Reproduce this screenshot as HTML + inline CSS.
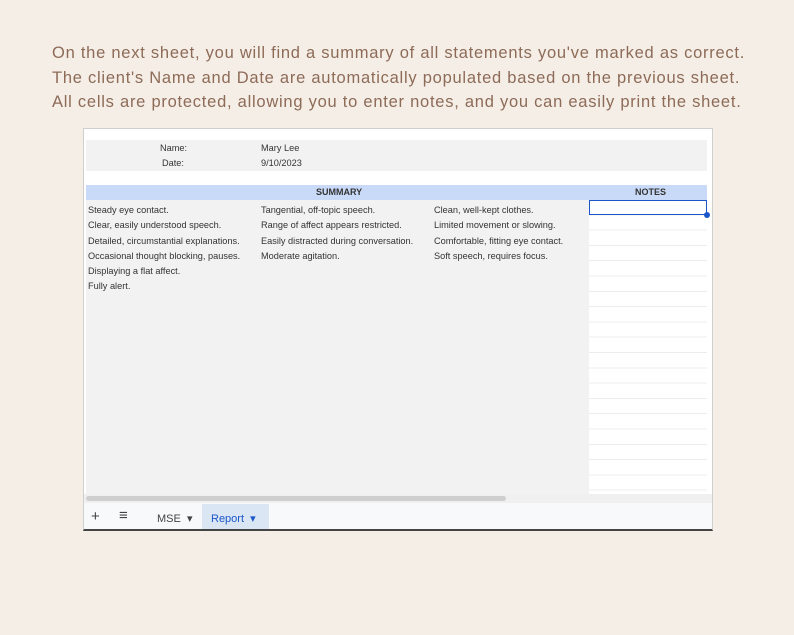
<!DOCTYPE html>
<html><head><style>
body{margin:0;width:794px;height:635px;background:#f5eee7;position:relative;overflow:hidden;font-family:"Liberation Sans",sans-serif}
.intro{position:absolute;left:52px;top:41px;color:#8d6b57;font-size:16.5px;line-height:24.5px;letter-spacing:0.75px;white-space:nowrap}
.sheet{position:absolute;left:83px;top:128px;width:628px;height:400px;background:#fff;border:1px solid #cfcfcf;border-bottom:2px solid #444}
.a{position:absolute;font-size:9.2px;color:#333;white-space:nowrap}
</style></head><body>
<div class="intro">On the next sheet, you will find a summary of all statements you've marked as correct.<br>The client's Name and Date are automatically populated based on the previous sheet.<br>All cells are protected, allowing you to enter notes, and you can easily print the sheet.</div>
<div class="sheet">
<div style="position:absolute;left:2px;top:11px;width:621px;height:31px;background:#f2f2f2"></div>
<div class="a" style="left:76px;top:14px">Name:</div>
<div class="a" style="left:78px;top:29px">Date:</div>
<div class="a" style="left:177px;top:14px">Mary Lee</div>
<div class="a" style="left:177px;top:29px">9/10/2023</div>
<div style="position:absolute;left:2px;top:56px;width:621px;height:15px;background:#c9daf8"></div>
<div class="a" style="left:232px;top:58px;font-weight:bold;font-size:9px">SUMMARY</div>
<div class="a" style="left:551px;top:58px;font-weight:bold;font-size:9px">NOTES</div>
<div style="position:absolute;left:2px;top:71px;width:503px;height:294px;background:#f2f2f2"></div>
<div style="position:absolute;left:505px;top:71px;width:118px;height:294px;background:repeating-linear-gradient(#fff 0 14.3px,#ececec 14.3px 15.3px)"></div>
<div style="position:absolute;left:505px;top:71px;width:116px;height:13px;border:1.5px solid #1a56c8"></div>
<div style="position:absolute;left:620px;top:83px;width:6px;height:6px;border-radius:50%;background:#1a56c8"></div>
<div class="a" style="left:4px;top:74px;line-height:15.3px">Steady eye contact.<br>Clear, easily understood speech.<br>Detailed, circumstantial explanations.<br>Occasional thought blocking, pauses.<br>Displaying a flat affect.<br>Fully alert.</div>
<div class="a" style="left:177px;top:74px;line-height:15.3px">Tangential, off-topic speech.<br>Range of affect appears restricted.<br>Easily distracted during conversation.<br>Moderate agitation.</div>
<div class="a" style="left:350px;top:74px;line-height:15.3px">Clean, well-kept clothes.<br>Limited movement or slowing.<br>Comfortable, fitting eye contact.<br>Soft speech, requires focus.</div>
<div style="position:absolute;left:0;top:365px;width:628px;height:9px;background:#f0f0f0"></div>
<div style="position:absolute;left:2px;top:367px;width:420px;height:5px;background:#cfcfcf;border-radius:3px"></div>
<div style="position:absolute;left:0;top:374px;width:628px;height:26px;background:#f8f9fa"></div>
<div style="position:absolute;left:118px;top:375px;width:67px;height:25px;background:#dbe6f5"></div>
<div class="a" style="left:7px;top:379px;font-size:15px;color:#444">+</div>
<div class="a" style="left:35px;top:378px;font-size:15px;color:#444">≡</div>
<div class="a" style="left:73px;top:383px;font-size:11px;color:#444">MSE &nbsp;▾</div>
<div class="a" style="left:127px;top:383px;font-size:11px;color:#1a56c8">Report &nbsp;▾</div>
</div>
</body></html>
